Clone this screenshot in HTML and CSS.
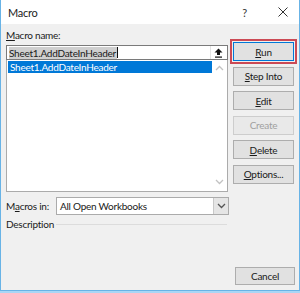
FILE: index.html
```html
<!DOCTYPE html>
<html>
<head>
<meta charset="utf-8">
<link rel="stylesheet" href="styles.css">
</head>
<body>
<div class="window">
  <div class="titlebar">
    <span class="title">Macro</span>
    <span class="help">?</span>
    <svg class="close" width="10" height="10" viewBox="0 0 10 10"><path d="M0.5 0.5 L9.5 9.5 M9.5 0.5 L0.5 9.5" stroke="#333" stroke-width="1" fill="none"/></svg>
  </div>
  <div class="content">
    <div class="top">
      <div class="left">
        <div class="label"><u>M</u>acro name:</div>
        <div class="namebox">
          <span class="seltext">Sheet1.AddDateInHeader</span><span class="caret"></span>
          <span class="upbtn"><svg width="9" height="10" viewBox="0 0 9 10"><path d="M4.5 0.5 L8.5 4.5 L6 4.5 L6 7 L3 7 L3 4.5 L0.5 4.5 Z" fill="#111"/><rect x="1" y="8.5" width="7" height="1.2" fill="#111"/></svg></span>
        </div>
        <div class="listbox">
          <div class="items">
            <div class="item selected">Sheet1.AddDateInHeader</div>
          </div>
          <div class="vscroll">
            <svg width="9" height="6" viewBox="0 0 9 6"><path d="M1 5 L4.5 1.5 L8 5" stroke="#c2c2c2" stroke-width="1.3" fill="none"/></svg>
            <svg width="9" height="6" viewBox="0 0 9 6"><path d="M1 1 L4.5 4.5 L8 1" stroke="#c2c2c2" stroke-width="1.3" fill="none"/></svg>
          </div>
        </div>
      </div>
      <div class="buttons">
        <button class="btn default"><u>R</u>un</button>
        <button class="btn"><u>S</u>tep Into</button>
        <button class="btn"><u>E</u>dit</button>
        <button class="btn disabled">Create</button>
        <button class="btn"><u>D</u>elete</button>
        <button class="btn"><u>O</u>ptions...</button>
      </div>
    </div>
    <div class="macrosin">
      <span class="label2">M<u>a</u>cros in:</span>
      <div class="combo">
        <span class="combotext">All Open Workbooks</span>
        <span class="comboarrow"><svg width="9" height="6" viewBox="0 0 9 6"><path d="M1 1 L4.5 4.5 L8 1" stroke="#555" stroke-width="1.3" fill="none"/></svg></span>
      </div>
    </div>
    <div class="descrow">
      <span class="label2">Description</span>
      <span class="rule"></span>
    </div>
    <div class="footer">
      <button class="btn">Cancel</button>
    </div>
  </div>
</div>
</body>
</html>
```

FILE: styles.css
```css
html, body {
  margin: 0;
  padding: 0;
  background: #a9d6f5;
}
body {
  font-family: "Lato", "Noto Sans", sans-serif;
  font-size: 10px;
  letter-spacing: -0.25px;
  color: #1a1a1a;
}
.window {
  width: 298px;
  height: 290px;
  border: 1px solid #68b3e6;
  border-top: none;
  background: #f0f0f0;
  display: flex;
  flex-direction: column;
}
.titlebar {
  height: 24px;
  background: #fff;
  display: flex;
  align-items: center;
  padding-left: 7px;
  flex-shrink: 0;
}
.title {
  font-size: 11px;
  color: #222;
  flex: 1;
}
.help {
  font-size: 11px;
  color: #333;
  margin-right: 31px;
}
.close {
  margin-right: 11px;
}
.content {
  flex: 1;
  display: flex;
  flex-direction: column;
  padding: 4px 4px 0 5px;
}
.top {
  display: flex;
  gap: 5px;
}
.left {
  width: 222px;
  display: flex;
  flex-direction: column;
}
.label {
  height: 14px;
  line-height: 14px;
  margin-bottom: 3px;
}
.namebox {
  height: 13px;
  border: 1px solid #7a7a7a;
  background: #fff;
  display: flex;
  align-items: center;
  padding-left: 2px;
}
.seltext {
  background: #cfcfcf;
  line-height: 12px;
  padding-right: 1px;
}
.caret {
  width: 1px;
  height: 11px;
  background: #111;
}
.upbtn {
  margin-left: auto;
  width: 15px;
  height: 13px;
  display: flex;
  align-items: center;
  justify-content: center;
  border-left: 1px solid #e3e3e3;
  margin-right: 1px;
}
.listbox {
  height: 131px;
  border: 1px solid #ababab;
  border-top: none;
  background: #fff;
  display: flex;
}
.items {
  flex: 1;
  padding: 1px 0 0 1px;
}
.item {
  height: 12px;
  line-height: 12px;
  padding-left: 2px;
}
.item.selected {
  background: #0078d7;
  color: #fff;
}
.vscroll {
  width: 15px;
  display: flex;
  flex-direction: column;
  justify-content: space-between;
  align-items: center;
  padding: 5px 0 6px;
}
.buttons {
  width: 61px;
  display: flex;
  flex-direction: column;
  gap: 5.5px;
  padding-top: 14px;
}
.btn {
  font-family: "Lato", "Noto Sans", sans-serif;
  font-size: 10px;
  letter-spacing: -0.25px;
  color: #1a1a1a;
  height: 19px;
  padding: 0;
  background: #e1e1e1;
  border: 1px solid #adadad;
  line-height: 16px;
}
.btn.default {
  border-color: #0078d7;
  outline: 2px solid #cc4a55;
  outline-offset: 1px;
}
.btn.disabled {
  color: #a0a0a0;
  background: #e9e9e9;
  border-color: #cdcdcd;
}
.macrosin {
  display: flex;
  align-items: center;
  margin-top: 5px;
  height: 18px;
}
.label2 {
  width: 50px;
  flex-shrink: 0;
}
.combo {
  width: 168px;
  height: 16px;
  border: 1px solid #ababab;
  background: #fff;
  display: flex;
  align-items: center;
  padding-left: 3px;
}
.combotext {
  flex: 1;
}
.comboarrow {
  width: 14px;
  height: 16px;
  background: #e5e5e5;
  border-left: 1px solid #c8c8c8;
  display: flex;
  align-items: center;
  justify-content: center;
}
.descrow {
  display: flex;
  align-items: center;
  height: 14px;
  margin-top: 2px;
}
.rule {
  width: 171px;
  height: 1px;
  background: #dcdcdc;
}
.footer {
  margin-top: auto;
  display: flex;
  justify-content: flex-end;
  padding-bottom: 5px;
}
.footer .btn {
  width: 60px;
  height: 18px;
}
```
